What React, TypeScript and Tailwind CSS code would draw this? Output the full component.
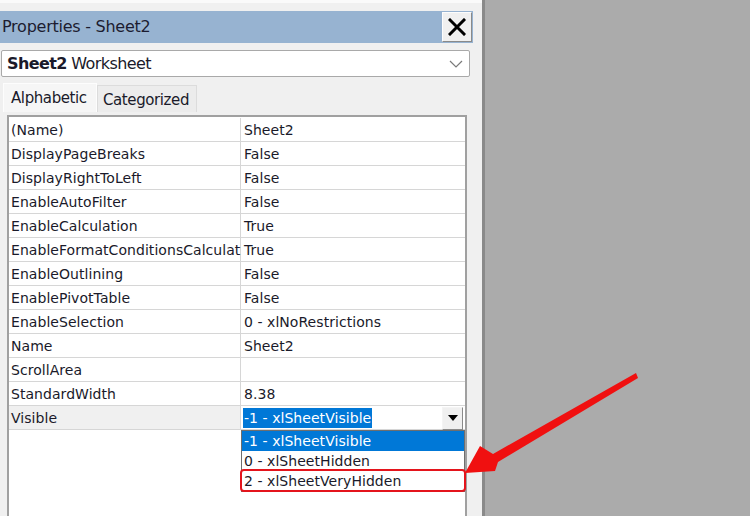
const font = { fontFamily: '"DejaVu Sans", Tahoma, sans-serif' };

const rows: [string, string][] = [
  ['(Name)', 'Sheet2'],
  ['DisplayPageBreaks', 'False'],
  ['DisplayRightToLeft', 'False'],
  ['EnableAutoFilter', 'False'],
  ['EnableCalculation', 'True'],
  ['EnableFormatConditionsCalculat', 'True'],
  ['EnableOutlining', 'False'],
  ['EnablePivotTable', 'False'],
  ['EnableSelection', '0 - xlNoRestrictions'],
  ['Name', 'Sheet2'],
  ['ScrollArea', ''],
  ['StandardWidth', '8.38'],
];

function Row({ name, value }: { name: string; value: string }) {
  return (
    <div className="flex h-[24px] border-b border-[#d6d6d6]">
      <div className="w-[232px] shrink-0 whitespace-nowrap border-r border-[#d6d6d6] pl-[2px] pt-[2px] leading-[21px]">
        {name}
      </div>
      <div className="flex-1 pl-[3px] pt-[2px] leading-[21px] whitespace-nowrap">{value}</div>
    </div>
  );
}

export default function App() {
  return (
    <div className="relative flex h-[516px] w-[750px] overflow-hidden bg-[#ababab] text-[14px] tracking-[0.05px] text-[#1a1a2a]" style={font}>
      {/* Properties window */}
      <div className="flex w-[482px] shrink-0 flex-col bg-[#f0f0f0]">
        <div className="h-[11px] border-t-[3px] border-t-[#fafafa]" />

        {/* Title bar */}
        <div className="flex h-[32px] w-[473px] items-center justify-between bg-[#97b3d1] pl-[2px]">
          <span className="text-[16px] tracking-[-0.25px] text-[#1c1c30]">Properties - Sheet2</span>
          <button className="mb-[1px] mr-[1px] flex h-[30px] w-[30px] items-center justify-center border border-t-[#fdfdfd] border-l-[#fdfdfd] border-r-[#8a8a8a] border-b-[#8a8a8a] bg-[#f0f0f0]">
            <svg width="18" height="18" viewBox="0 0 18 18">
              <path d="M2 2 L16 16 M16 2 L2 16" stroke="#000" strokeWidth="3" strokeLinecap="square" />
            </svg>
          </button>
        </div>

        {/* Object selector */}
        <div className="ml-[1px] mt-[7px] flex h-[27px] w-[469px] items-center justify-between rounded-[2px] border border-[#a9a9a9] bg-white pl-[5px] pr-[6px] text-[16px] tracking-[-0.6px]">
          <span>
            <b>Sheet2</b> Worksheet
          </span>
          <svg width="14" height="10" viewBox="0 0 14 10">
            <path d="M1 2 L7 8 L13 2" fill="none" stroke="#7a7a7a" strokeWidth="1.2" />
          </svg>
        </div>

        {/* Tabs */}
        <div className="mt-[6px] flex h-[29px] items-end pl-[3px]">
          <div className="h-[29px] w-[94px] border border-b-0 border-[#fdfdfd] bg-[#f6f6f6] pl-[7px] pt-[3px] text-[15px] tracking-[-0.4px]">Alphabetic</div>
          <div className="h-[27px] w-[100px] border border-b-0 border-[#dcdcdc] bg-[#ececec] pl-[5px] pt-[3px] text-[15px] tracking-[-0.4px]">Categorized</div>
        </div>

        {/* Property grid */}
        <div className="ml-[7px] mt-[3px] w-[460px] flex-1 border-l-2 border-t-2 border-r-2 border-[#a0a0a0] bg-white pt-[1px]">
          {rows.map(([n, v]) => (
            <Row key={n} name={n} value={v} />
          ))}
          <div className="flex h-[24px] border-b border-[#d6d6d6]">
            <div className="w-[232px] shrink-0 border-r border-[#d6d6d6] bg-[#f0f0f0] pl-[2px] pt-[2px] leading-[21px]">Visible</div>
            <div className="flex flex-1 items-center justify-between pl-[2px] pt-[1px]">
              <span className="bg-[#0078d7] px-[1px] leading-[20px] text-white">-1 - xlSheetVisible</span>
              <div className="mr-[2px] flex h-[23px] w-[21px] items-center justify-center border border-[#f4f4f4] border-r-[#8a8a8a] border-b-[#8a8a8a] bg-[#f0f0f0]">
                <svg width="10" height="6" viewBox="0 0 10 6">
                  <path d="M0 0 L10 0 L5 6 Z" fill="#000" />
                </svg>
              </div>
            </div>
          </div>
        </div>
      </div>
      <div className="w-[3px] shrink-0 bg-[#8a8a8a]" />

      {/* Dropdown list */}
      <div className="absolute left-[241px] top-[430px] w-[224px] border border-[#6e6e6e] bg-white">
        <div className="h-[20px] bg-[#0078d7] pl-[2px] leading-[21px] text-white">-1 - xlSheetVisible</div>
        <div className="h-[20px] pl-[2px] leading-[21px]">0 - xlSheetHidden</div>
        <div className="h-[20px] pl-[2px] leading-[21px]">2 - xlSheetVeryHidden</div>
      </div>

      {/* Highlight annotation */}
      <div className="absolute left-[240px] top-[469px] h-[23px] w-[226px] rounded-[4px] border-2 border-[#e4141c]" />
      <svg className="absolute left-0 top-0" width="750" height="516" viewBox="0 0 750 516">
        <polygon points="636,373 493,454 480,446 465,473 495,471 498,462 638,378" fill="#f01010" />
      </svg>
    </div>
  );
}
